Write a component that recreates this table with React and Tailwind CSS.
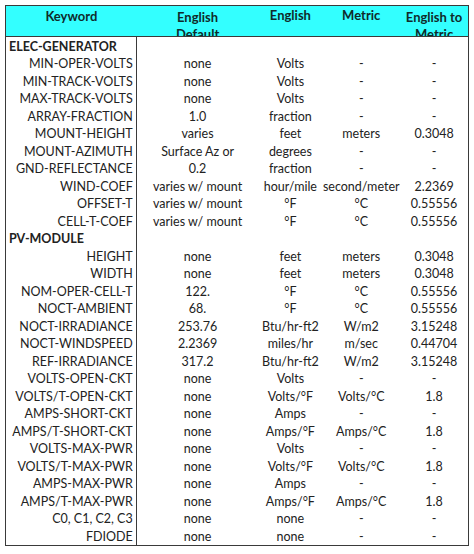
import React from "react";

const rows = [
  { section: "ELEC-GENERATOR" },
  ["MIN-OPER-VOLTS", "none", "Volts", "-", "-"],
  ["MIN-TRACK-VOLTS", "none", "Volts", "-", "-"],
  ["MAX-TRACK-VOLTS", "none", "Volts", "-", "-"],
  ["ARRAY-FRACTION", "1.0", "fraction", "-", "-"],
  ["MOUNT-HEIGHT", "varies", "feet", "meters", "0.3048"],
  ["MOUNT-AZIMUTH", "Surface Az or", "degrees", "-", "-"],
  ["GND-REFLECTANCE", "0.2", "fraction", "-", "-"],
  ["WIND-COEF", "varies w/ mount", "hour/mile", "second/meter", "2.2369"],
  ["OFFSET-T", "varies w/ mount", "°F", "°C", "0.55556"],
  ["CELL-T-COEF", "varies w/ mount", "°F", "°C", "0.55556"],
  { section: "PV-MODULE" },
  ["HEIGHT", "none", "feet", "meters", "0.3048"],
  ["WIDTH", "none", "feet", "meters", "0.3048"],
  ["NOM-OPER-CELL-T", "122.", "°F", "°C", "0.55556"],
  ["NOCT-AMBIENT", "68.", "°F", "°C", "0.55556"],
  ["NOCT-IRRADIANCE", "253.76", "Btu/hr-ft2", "W/m2", "3.15248"],
  ["NOCT-WINDSPEED", "2.2369", "miles/hr", "m/sec", "0.44704"],
  ["REF-IRRADIANCE", "317.2", "Btu/hr-ft2", "W/m2", "3.15248"],
  ["VOLTS-OPEN-CKT", "none", "Volts", "-", "-"],
  ["VOLTS/T-OPEN-CKT", "none", "Volts/°F", "Volts/°C", "1.8"],
  ["AMPS-SHORT-CKT", "none", "Amps", "-", "-"],
  ["AMPS/T-SHORT-CKT", "none", "Amps/°F", "Amps/°C", "1.8"],
  ["VOLTS-MAX-PWR", "none", "Volts", "-", "-"],
  ["VOLTS/T-MAX-PWR", "none", "Volts/°F", "Volts/°C", "1.8"],
  ["AMPS-MAX-PWR", "none", "Amps", "-", "-"],
  ["AMPS/T-MAX-PWR", "none", "Amps/°F", "Amps/°C", "1.8"],
  ["C0, C1, C2, C3", "none", "none", "-", "-"],
  ["FDIODE", "none", "none", "-", "-"],
];

const widths = ["w-[131px]", "w-[122px]", "w-[64px]", "w-[78px]", "w-[68px]"];

export default function App() {
  return (
    <div
      className="bg-white w-[474px] h-[554px] pt-[5px] pl-[5px] text-[12.5px] text-[#222]"
      style={{ fontFamily: "Lato, 'Open Sans', sans-serif" }}
    >
      <div className="w-[464px] border border-[#3a3a3a]">
        <div className="flex h-[31px] bg-[#33ffff] border-b border-[#3a3a3a] font-bold text-[13px] text-[#0f2b2b] leading-[17px] overflow-hidden">
          <div className="w-[131px] text-center pt-[2px]">Keyword</div>
          <div className="w-[122px] text-center pt-[3px]">
            English
            <br />
            Default
          </div>
          <div className="w-[64px] text-center pt-[1px]">English</div>
          <div className="w-[78px] text-center pt-[1px]">Metric</div>
          <div className="w-[68px] text-center pt-[3px]">
            English to
            <br />
            Metric
          </div>
        </div>
        {rows.map((r, i) =>
          r.section ? (
            <div key={i} className="flex h-[17.5px]">
              <div className="w-[131px] h-full flex items-center pt-[3px] pl-[3px] font-bold border-r border-[#3a3a3a]">
                {r.section}
              </div>
            </div>
          ) : (
            <div key={i} className="flex h-[17.5px]">
              <div className="w-[131px] h-full flex items-center justify-end pt-[3px] pr-[3px] border-r border-[#3a3a3a] whitespace-nowrap">
                {r[0]}
              </div>
              {r.slice(1).map((v, j) => (
                <div
                  key={j}
                  className={`${widths[j + 1]} h-full flex items-center justify-center pt-[3px] whitespace-nowrap overflow-x-clip`}
                >
                  <span className="shrink-0">{v}</span>
                </div>
              ))}
            </div>
          )
        )}
      </div>
    </div>
  );
}
